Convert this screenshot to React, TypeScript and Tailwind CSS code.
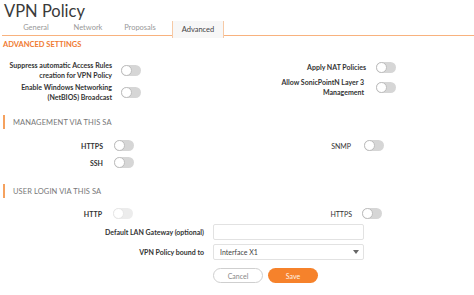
function Toggle({ disabled = false }: { disabled?: boolean }) {
  return (
    <div
      className={`relative h-[11px] w-[20px] rounded-full ${
        disabled ? 'bg-[#ececec]' : 'bg-[#d6d6d6]'
      }`}
    >
      <div
        className={`absolute left-0 top-0 h-[11px] w-[11px] rounded-full border bg-white ${
          disabled ? 'border-[#e6e6e6]' : 'border-[#bdbdbd]'
        }`}
      />
    </div>
  )
}

function SectionHeader({ title }: { title: string }) {
  return (
    <div className="flex items-center h-[14px] pl-[3px]">
      <div className="h-[14px] w-[2px] bg-[#f5a15e]" />
      <span className="ml-[8px] text-[7.5px] text-[#777] tracking-[0.1px]">{title}</span>
    </div>
  )
}

export default function App() {
  const tabs = ['General', 'Network', 'Proposals']

  return (
    <div
      className="w-[474px] h-[295px] bg-white overflow-hidden text-[#333]"
      style={{ fontFamily: 'Lato, "Liberation Sans", sans-serif' }}
    >
      {/* Title */}
      <div className="pl-[4px] h-[21px] text-[16.5px] leading-[22px] text-[#3a3a3a]">
        VPN Policy
      </div>

      {/* Tabs */}
      <div className="flex h-[15px] border-b-[1.5px] border-[#f8b27e] ml-[2px]">
        {tabs.map((t) => (
          <div
            key={t}
            className="w-[52px] flex items-center justify-center text-[7.5px] text-[#999] first:ml-[8px]"
          >
            {t}
          </div>
        ))}
        <div className="ml-[6px] w-[52px] -mb-[1.5px] flex items-center justify-center bg-[#f7f7f7] border-x border-[#f6c9a5] text-[7.5px] text-[#444] h-[16.5px]">
          Advanced
        </div>
      </div>

      {/* Advanced settings */}
      <div className="pl-[3px] pt-[3px] text-[7.5px] font-bold text-[#f07a30]">
        ADVANCED SETTINGS
      </div>

      <div className="flex mt-[11px] text-[7px] font-bold leading-[9.5px]">
        <div className="w-[237px] flex flex-col gap-[3px]">
          <div className="flex items-center">
            <div className="w-[112px] text-right">
              Suppress automatic Access Rules
              <br />
              creation for VPN Policy
            </div>
            <div className="ml-[9px]">
              <Toggle />
            </div>
          </div>
          <div className="flex items-center">
            <div className="w-[112px] text-right">
              Enable Windows Networking
              <br />
              (NetBIOS) Broadcast
            </div>
            <div className="ml-[9px]">
              <Toggle />
            </div>
          </div>
        </div>
        <div className="flex flex-col gap-[5px] pt-[1px]">
          <div className="flex items-center">
            <div className="w-[129px] text-right">Apply NAT Policies</div>
            <div className="ml-[10px]">
              <Toggle />
            </div>
          </div>
          <div className="flex items-center">
            <div className="w-[127px] text-right">
              Allow SonicPointN Layer 3
              <br />
              Management
            </div>
            <div className="ml-[12px]">
              <Toggle />
            </div>
          </div>
        </div>
      </div>

      {/* Management */}
      <div className="mt-[13px]">
        <SectionHeader title="MANAGEMENT VIA THIS SA" />
      </div>

      <div className="flex mt-[11px] text-[7px] font-bold">
        <div className="w-[237px] flex flex-col gap-[6px]">
          <div className="flex items-center">
            <div className="w-[103px] text-right">HTTPS</div>
            <div className="ml-[11px]">
              <Toggle />
            </div>
          </div>
          <div className="flex items-center">
            <div className="w-[103px] text-right">SSH</div>
            <div className="ml-[11px]">
              <Toggle />
            </div>
          </div>
        </div>
        <div className="flex items-start">
          <div className="flex items-center">
            <div className="w-[114px] text-right font-normal">SNMP</div>
            <div className="ml-[13px]">
              <Toggle />
            </div>
          </div>
        </div>
      </div>

      {/* User login */}
      <div className="mt-[16px]">
        <SectionHeader title="USER LOGIN VIA THIS SA" />
      </div>

      <div className="flex mt-[10px] text-[7px] font-bold">
        <div className="w-[237px] flex items-center">
          <div className="w-[102px] text-right">HTTP</div>
          <div className="ml-[11px]">
            <Toggle disabled />
          </div>
        </div>
        <div className="flex items-center">
          <div className="w-[115px] text-right font-normal">HTTPS</div>
          <div className="ml-[10px]">
            <Toggle />
          </div>
        </div>
      </div>

      <div className="mt-[5px] flex flex-col gap-[4px] text-[7px]">
        <div className="flex items-center">
          <div className="w-[204px] text-right font-bold">Default LAN Gateway (optional)</div>
          <div className="ml-[9px] w-[151px] h-[16px] border border-[#e2e2e2] rounded-[2px] bg-white" />
        </div>
        <div className="flex items-center">
          <div className="w-[204px] text-right font-bold">VPN Policy bound to</div>
          <div className="ml-[9px] w-[151px] h-[16px] border border-[#e2e2e2] rounded-[2px] bg-white flex items-center justify-between pl-[6px] pr-[4px] text-[#444]">
            <span>Interface X1</span>
            <div className="w-0 h-0 border-x-[3.5px] border-x-transparent border-t-[4px] border-t-[#666]" />
          </div>
        </div>
      </div>

      <div className="flex ml-[213px] mt-[8px] gap-[5px] text-[7px]">
        <button className="w-[50px] h-[15px] rounded-full border border-[#cfcfcf] bg-white text-[#888]">
          Cancel
        </button>
        <button className="w-[50px] h-[15px] rounded-full bg-[#f6822b] text-[#fff3e6]">
          Save
        </button>
      </div>
    </div>
  )
}
